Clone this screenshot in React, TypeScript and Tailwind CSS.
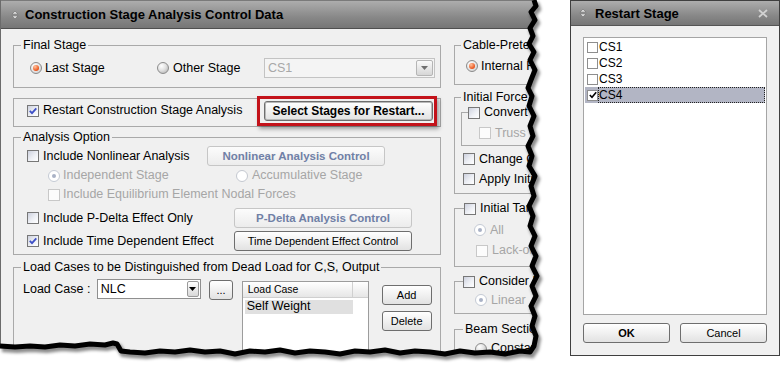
import React from 'react';

type RK = 'on' | 'off' | 'don' | 'doff';

function Chk({ on = false, dis = false }: { on?: boolean; dis?: boolean }) {
  return (
    <span
      className={
        dis
          ? 'relative block h-[12px] w-[12px] shrink-0 border border-[#c8c8c8] bg-[#fcfcfc]'
          : 'relative block h-[12px] w-[12px] shrink-0 border border-[#777777] bg-[linear-gradient(135deg,#cdd1de_0%,#eef0f5_55%,#ffffff_100%)]'
      }
    >
      {on ? (
        <svg className="absolute left-[1px] top-[1px]" width="8" height="8" viewBox="0 0 8 8">
          <path d="M0.8 3.9 L3 6.2 L7.3 1.4" fill="none" stroke="#3d4fc6" strokeWidth="1.8" />
        </svg>
      ) : null}
    </span>
  );
}

function Rad({ k }: { k: RK }) {
  if (k === 'on')
    return (
      <span className="flex h-[12px] w-[12px] shrink-0 items-center justify-center rounded-full border border-[#8a8a8a] bg-[radial-gradient(circle_at_35%_30%,#ffffff,#cccccc)]">
        <span className="h-[6px] w-[6px] rounded-full bg-[radial-gradient(circle_at_35%_30%,#ffc4a0,#ec5a22_65%,#c83c10)]" />
      </span>
    );
  if (k === 'off')
    return (
      <span className="block h-[12px] w-[12px] shrink-0 rounded-full border border-[#8c8c8c] bg-[radial-gradient(circle_at_35%_30%,#ffffff,#e2e2e2_45%,#a9a9a9)]" />
    );
  if (k === 'don')
    return (
      <span className="flex h-[12px] w-[12px] shrink-0 items-center justify-center rounded-full border border-[#c4cad4] bg-white">
        <span className="h-[4px] w-[4px] rounded-full bg-[#a9b2c6]" />
      </span>
    );
  return <span className="block h-[12px] w-[12px] shrink-0 rounded-full border border-[#c4c8d0] bg-white" />;
}

function Btn({ children, c, dis = false }: { children: React.ReactNode; c: string; dis?: boolean }) {
  return (
    <div
      className={`flex shrink-0 items-center justify-center whitespace-nowrap rounded-[3px] border ${
        dis
          ? 'border-[#c6c6c6] bg-[linear-gradient(#fcfcfc,#ececec)] text-[#7080a6]'
          : 'border-[#6e6e6e] bg-[linear-gradient(#ffffff,#e2e2e2)] text-black'
      } ${c}`}
    >
      {children}
    </div>
  );
}

function Tri({ color }: { color: string }) {
  return (
    <svg width="7" height="4" viewBox="0 0 7 4">
      <path d="M0 0 L7 0 L3.5 4 Z" fill={color} />
    </svg>
  );
}

function UpDown() {
  return (
    <svg width="8" height="10" viewBox="0 0 8 10">
      <path d="M1 4.2 L4 1 L7 4.2 Z" fill="#dedede" stroke="#6a6a6a" strokeWidth="0.6" />
      <path d="M1 5.8 L4 9 L7 5.8 Z" fill="#dedede" stroke="#6a6a6a" strokeWidth="0.6" />
    </svg>
  );
}

const rightPts: number[][] = [
  [534, 0], [536, 6], [531, 12], [535, 20], [530, 28], [533, 36], [529, 44], [534, 52], [530, 60], [535, 70],
  [531, 80], [528, 88], [532, 96], [529, 106], [534, 116], [530, 126], [533, 136], [528, 146], [532, 156],
  [529, 166], [535, 176], [531, 186], [534, 196], [529, 206], [533, 216], [530, 226], [535, 236], [531, 246],
  [536, 256], [532, 266], [537, 276], [532, 286], [536, 296], [531, 306], [535, 316], [532, 326], [536, 336],
  [534, 346],
];
const bottomPts: number[][] = [
  [530, 352], [520, 351], [505, 354], [490, 352], [475, 353], [460, 351], [445, 354], [430, 352], [415, 351],
  [400, 353], [385, 350], [370, 352], [355, 351], [340, 354], [325, 352], [310, 351], [295, 353], [280, 350],
  [265, 352], [250, 351], [235, 354], [220, 351], [205, 352], [190, 350], [175, 352], [160, 351], [145, 353],
  [130, 352], [121, 351], [117, 344], [113, 343], [105, 345], [90, 344], [75, 346], [60, 345], [45, 347],
  [30, 346], [15, 347], [0, 346],
];
const edge = [...rightPts, ...bottomPts];
const edgeD = 'M' + edge.map((p) => p[0] + ' ' + p[1]).join(' L');
const fillD = 'M570 0 L' + edge.map((p) => p[0] + ' ' + p[1]).join(' L') + ' L0 372 L570 372 Z';

const GB = 'min-w-0 border border-[#a9a9a9]';

export default function App() {
  return (
    <div className="flex h-[372px] w-[780px] overflow-hidden whitespace-nowrap bg-white font-['Liberation_Sans',Arial,sans-serif] text-[12.5px] leading-[15px] text-black">
      {/* Main dialog (torn) */}
      <div className="relative h-[372px] w-[570px] shrink-0 overflow-hidden">
        <div className="flex h-[372px] w-[565px] flex-col border-l border-[#6b6b6b] bg-[#f0f0f0]">
          <div className="flex h-[29px] shrink-0 items-center border-b border-t border-b-[#4f4f4f] border-t-[#7a7a7a] bg-[linear-gradient(#adadad,#888888_60%,#767676)] pl-[10px]">
            <UpDown />
            <span className="ml-[6px] text-[13px] font-bold">Construction Stage Analysis Control Data</span>
          </div>
          <div className="flex flex-1 pl-[12px]">
            {/* Left column */}
            <div className="flex w-[428px] shrink-0 flex-col pt-[9px]">
              <fieldset className={GB}>
                <legend className="ml-[7px] px-[2px]">Final Stage</legend>
                <div className="pb-[9px] pt-[5px]">
                  <div className="flex h-[20px] items-center pl-[16px]">
                    <div className="flex w-[127px] items-center gap-[3px]">
                      <Rad k="on" />
                      <span>Last Stage</span>
                    </div>
                    <div className="flex w-[107px] items-center gap-[4px]">
                      <Rad k="off" />
                      <span>Other Stage</span>
                    </div>
                    <div className="flex h-[20px] w-[171px] items-center border border-[#c3c3c3] bg-[#f4f4f4]">
                      <span className="flex-1 pl-[3px] text-[#a8a8a8]">CS1</span>
                      <span className="mr-[1px] flex h-[16px] w-[17px] items-center justify-center rounded-[2px] border border-[#b5b5b5] bg-[linear-gradient(#fafafa,#d6d6d6)]">
                        <Tri color="#6f6f6f" />
                      </span>
                    </div>
                  </div>
                </div>
              </fieldset>

              <div className="mt-[10px] flex h-[29px] shrink-0 border border-[#a9a9a9] pl-[13px]">
                <div className="mt-[4px] flex h-[15px] w-[237px] items-center gap-[4px]">
                  <Chk on />
                  <span>Restart Construction Stage Analysis</span>
                </div>
                <div className="relative mt-[2px]">
                  <Btn c="h-[20px] w-[169px] border-[#3a3a3a] text-[12px] font-bold shadow-[inset_0_0_0_1px_#b8b8b8]">
                    Select Stages for Restart...
                  </Btn>
                  <div className="pointer-events-none absolute left-[-7px] top-[-5.5px] h-[30px] w-[180px] border-[3.5px] border-[#c3121a] shadow-[2px_3px_4px_rgba(0,0,0,0.35)]" />
                </div>
              </div>

              <fieldset className={`mt-[3px] ${GB}`}>
                <legend className="ml-[7px] px-[2px]">Analysis Option</legend>
                <div className="pb-[3px] pl-[13px] pt-[1px]">
                  <div className="flex h-[20px] items-center">
                    <div className="flex w-[180px] items-center gap-[4px]">
                      <Chk />
                      <span>Include Nonlinear Analysis</span>
                    </div>
                    <Btn dis c="h-[20px] w-[178px] text-[11.5px] font-bold">
                      Nonlinear Analysis Control
                    </Btn>
                  </div>
                  <div className="flex h-[19px] items-center pl-[21px] text-[#a6a6a6]">
                    <div className="flex w-[188px] items-center gap-[3px]">
                      <Rad k="don" />
                      <span>Independent Stage</span>
                    </div>
                    <div className="flex items-center gap-[4px]">
                      <Rad k="doff" />
                      <span>Accumulative Stage</span>
                    </div>
                  </div>
                  <div className="flex h-[19px] items-center gap-[3px] pl-[21px] text-[#a6a6a6]">
                    <Chk dis />
                    <span>Include Equilibrium Element Nodal Forces</span>
                  </div>
                  <div className="mt-[4px] flex h-[20px] items-center">
                    <div className="flex w-[207px] items-center gap-[4px]">
                      <Chk />
                      <span>Include P-Delta Effect Only</span>
                    </div>
                    <Btn dis c="h-[20px] w-[178px] text-[11.5px] font-bold">
                      P-Delta Analysis Control
                    </Btn>
                  </div>
                  <div className="mt-[3px] flex h-[20px] items-center">
                    <div className="flex w-[207px] items-center gap-[4px]">
                      <Chk on />
                      <span>Include Time Dependent Effect</span>
                    </div>
                    <Btn c="h-[20px] w-[178px] text-[11px]">Time Dependent Effect Control</Btn>
                  </div>
                </div>
              </fieldset>

              <fieldset className={`mt-[5px] flex-1 ${GB}`}>
                <legend className="ml-[7px] px-[2px]">Load Cases to be Distinguished from Dead Load for C,S, Output</legend>
                <div className="flex items-start pl-[9px] pt-[4px]">
                  <span className="mt-[2.5px] w-[73.7px]">Load Case :</span>
                  <div className="flex h-[20px] w-[104px] items-center border border-[#8f8f8f] bg-white">
                    <span className="flex-1 pl-[3px]">NLC</span>
                    <span className="mr-[1px] flex h-[16px] w-[12px] items-center justify-center rounded-[2px] border border-[#9a9a9a] bg-[linear-gradient(#ffffff,#d8d8d8)]">
                      <Tri color="#000000" />
                    </span>
                  </div>
                  <Btn c="ml-[8.3px] mt-[1px] h-[20px] w-[24px] text-[11px] leading-[11px]">...</Btn>
                  <div className="ml-[8.7px] mt-[2px] h-[80px] w-[127.3px] border border-[#9c9c9c] bg-white">
                    <div className="flex h-[16px] border-b border-[#cfcfcf] bg-[linear-gradient(#ffffff,#e6e6e6)]">
                      <span className="w-[110px] border-r border-[#d0d0d0] pl-[5px] text-[10.5px] leading-[15px]">Load Case</span>
                      <span className="flex-1" />
                    </div>
                    <div className="ml-[2px] mt-[2px] h-[13.5px] w-[108px] bg-[#e0e0e0] pl-[2px] leading-[13.5px]">Self Weight</div>
                  </div>
                  <div className="ml-[12.7px] flex flex-col">
                    <Btn c="mt-[6px] h-[20px] w-[50px] text-[11px]">Add</Btn>
                    <Btn c="mt-[6px] h-[20px] w-[50px] text-[11px]">Delete</Btn>
                  </div>
                </div>
              </fieldset>
            </div>

            {/* Right column */}
            <div className="ml-[13px] flex w-[110px] shrink-0 flex-col pt-[9px]">
              <fieldset className={GB}>
                <legend className="ml-[6px] px-[2px]">Cable-Pretension Force</legend>
                <div className="pb-[9px] pt-[4px]">
                  <div className="flex h-[18px] items-center gap-[3px] pl-[11px]">
                    <Rad k="on" />
                    <span>Internal Force</span>
                  </div>
                </div>
              </fieldset>

              <fieldset className={`mt-[5px] ${GB}`}>
                <legend className="ml-[6px] px-[2px]">Initial Force Control</legend>
                <fieldset className={`ml-[6px] ${GB}`}>
                  <legend className="ml-[6px]">
                    <span className="flex items-center gap-[4px] pr-[2px]">
                      <Chk />
                      <span>Convert Final Stage</span>
                    </span>
                  </legend>
                  <div className="pb-[3px] pt-[4px]">
                    <div className="flex h-[18px] items-center gap-[4px] pl-[17px] text-[#a6a6a6]">
                      <Chk dis />
                      <span>Truss</span>
                    </div>
                  </div>
                </fieldset>
                <div className="pb-[4px] pt-[3px]">
                  <div className="flex h-[20px] items-center gap-[4px] pl-[8px]">
                    <Chk />
                    <span>Change Cable Element</span>
                  </div>
                  <div className="flex h-[20px] items-center gap-[4px] pl-[8px]">
                    <Chk />
                    <span>Apply Initial Member Force</span>
                  </div>
                </div>
              </fieldset>

              <fieldset className={`mt-[7px] ${GB}`}>
                <legend className="ml-[9px]">
                  <span className="flex items-center gap-[4px] pr-[2px]">
                    <Chk />
                    <span>Initial Tangent Displacement</span>
                  </span>
                </legend>
                <div className="pb-[6px] pt-[5px] text-[#a6a6a6]">
                  <div className="flex h-[18px] items-center gap-[4px] pl-[19px]">
                    <Rad k="don" />
                    <span>All</span>
                  </div>
                  <div className="mt-[2px] flex h-[19px] items-center gap-[4px] pl-[21px]">
                    <Chk dis />
                    <span>Lack-of-Fit Force</span>
                  </div>
                </div>
              </fieldset>

              <fieldset className={`mt-[7px] ${GB}`}>
                <legend className="ml-[8px]">
                  <span className="flex items-center gap-[4px] pr-[2px]">
                    <Chk />
                    <span>Consider Re-Tensioning</span>
                  </span>
                </legend>
                <div className="pb-[4px] pt-[2px] text-[#a6a6a6]">
                  <div className="flex h-[18px] items-center gap-[4px] pl-[20px]">
                    <Rad k="don" />
                    <span>Linear</span>
                  </div>
                </div>
              </fieldset>

              <fieldset className={`mt-[7.5px] ${GB}`}>
                <legend className="ml-[8px] px-[2px]">Beam Section Property Changes</legend>
                <div className="pb-[10px] pt-[3px]">
                  <div className="flex h-[18px] items-center gap-[4px] pl-[20px]">
                    <Rad k="off" />
                    <span>Constant</span>
                  </div>
                </div>
              </fieldset>
            </div>
          </div>
        </div>
        {/* torn edge overlay */}
        <svg className="absolute left-0 top-0" width="570" height="372" viewBox="0 0 570 372">
          <defs>
            <filter id="tearblur" x="-10%" y="-10%" width="120%" height="120%">
              <feGaussianBlur stdDeviation="1.8" />
            </filter>
          </defs>
          <path d={fillD} fill="#ffffff" />
          <path
            d={edgeD}
            fill="none"
            stroke="#000000"
            strokeOpacity="0.45"
            strokeWidth="6"
            transform="translate(2 3)"
            filter="url(#tearblur)"
          />
          <path d={edgeD} fill="none" stroke="#000000" strokeWidth="5" strokeLinejoin="round" />
        </svg>
      </div>

      {/* Restart Stage dialog */}
      <div className="flex h-[356px] w-[210px] shrink-0 flex-col border border-[#3f3f3f] bg-[#f0f0f0]">
        <div className="flex h-[25px] shrink-0 items-center border-b border-[#555555] bg-[linear-gradient(#adadad,#888888_60%,#767676)] pl-[8px] pr-[11px]">
          <UpDown />
          <span className="ml-[8px] flex-1 text-[13px] font-bold">Restart Stage</span>
          <svg width="10" height="9" viewBox="0 0 10 9">
            <path d="M1 1 L9 8 M9 1 L1 8" stroke="#d2d2d2" strokeWidth="1.8" />
          </svg>
        </div>
        <div className="mx-[12px] mt-[11px] h-[278px] border border-[#a5a5a5] bg-white px-[1px] pt-[1px] text-[12px]">
          {['CS1', 'CS2', 'CS3', 'CS4'].map((s, i) => {
            const sel = i === 3;
            return (
              <div key={s} className={sel ? 'flex h-[16px] items-center bg-[#b2b5c4]' : 'flex h-[16px] items-center'}>
                <span className="relative ml-[2px] block h-[11px] w-[11px] shrink-0 border border-[#8e8e8e] bg-white">
                  {sel ? (
                    <svg className="absolute left-[0.5px] top-[0.5px]" width="8" height="8" viewBox="0 0 8 8">
                      <path d="M0.8 4 L3 6.3 L7.2 1.3" fill="none" stroke="#000000" strokeWidth="1.6" />
                    </svg>
                  ) : null}
                </span>
                <span
                  className={
                    sel
                      ? 'flex h-[16px] flex-1 items-center border border-dotted border-[#222222] leading-[14px]'
                      : 'flex h-[16px] flex-1 items-center border border-transparent leading-[14px]'
                  }
                >
                  {s}
                </span>
              </div>
            );
          })}
        </div>
        <div className="mx-[12px] mt-[8px] flex gap-[10px]">
          <Btn c="h-[20px] w-[87px] text-[11px] font-bold">OK</Btn>
          <Btn c="h-[20px] w-[87px] text-[11px]">Cancel</Btn>
        </div>
      </div>
    </div>
  );
}
